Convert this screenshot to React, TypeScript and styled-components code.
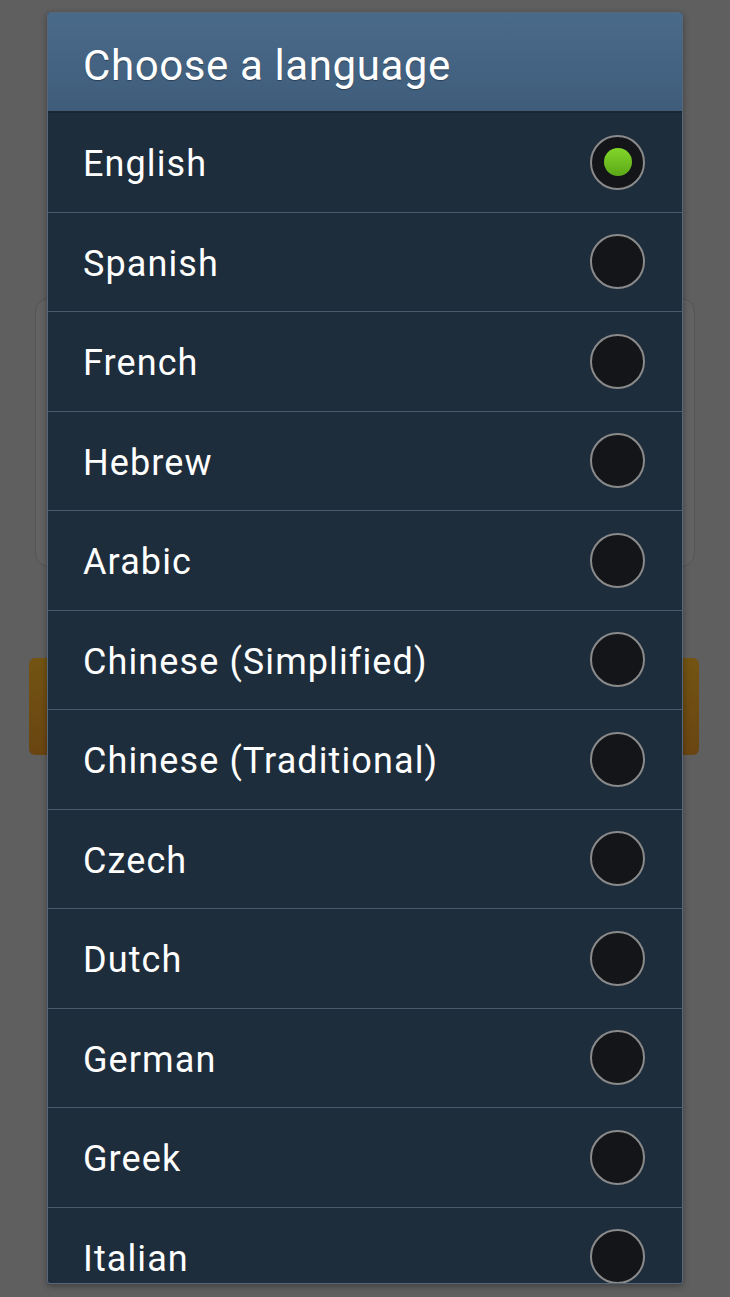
import styled, { createGlobalStyle } from "styled-components";

const GlobalStyle = createGlobalStyle`
  html, body {
    margin: 0;
    padding: 0;
    background: #5f5f5f;
  }
  * {
    box-sizing: border-box;
  }
`;

const languages = [
  "English",
  "Spanish",
  "French",
  "Hebrew",
  "Arabic",
  "Chinese (Simplified)",
  "Chinese (Traditional)",
  "Czech",
  "Dutch",
  "German",
  "Greek",
  "Italian",
];

export default function App() {
  const selected = "English";
  return (
    <Screen>
      <GlobalStyle />
      <Backdrop>
        <BackCard />
        <BackButton />
      </Backdrop>
      <Dialog>
        <Header>Choose a language</Header>
        <List>
          {languages.map((lang) => (
            <Row key={lang}>
              <Label>{lang}</Label>
              <Radio>{lang === selected && <Dot />}</Radio>
            </Row>
          ))}
        </List>
      </Dialog>
    </Screen>
  );
}

const Screen = styled.div`
  position: relative;
  width: 730px;
  height: 1297px;
  overflow: hidden;
  background: #5f5f5f;
  font-family: Roboto, "Noto Sans", sans-serif;
`;

const Backdrop = styled.div`
  display: flex;
  flex-direction: column;
  padding-top: 298px;
`;

const BackCard = styled.div`
  margin: 0 35px;
  height: 269px;
  border: 1px solid #555555;
  border-radius: 14px;
  background: #626262;
`;

const BackButton = styled.div`
  margin: 91px 31px 0 29px;
  height: 97px;
  border-radius: 6px;
  background: linear-gradient(#735413, #6a4511);
`;

const Dialog = styled.div`
  position: absolute;
  top: 12px;
  left: 47px;
  width: 636px;
  height: 1272px;
  display: flex;
  flex-direction: column;
  overflow: hidden;
  border: 1px solid #56677a;
  border-radius: 3px;
  background: #1e2d3c;
  box-shadow: 0 2px 6px rgba(0, 0, 0, 0.35);
`;

const Header = styled.div`
  flex: none;
  height: 100px;
  display: flex;
  align-items: center;
  padding: 6px 0 0 35px;
  background: linear-gradient(#4a6a8a, #3f5d7b);
  border-bottom: 2px solid #1a2532;
  color: #ffffff;
  font-size: 42px;
  letter-spacing: 0.6px;
  text-shadow: 0 1px 1px rgba(0, 0, 0, 0.35);
`;

const List = styled.div`
  display: flex;
  flex-direction: column;
`;

const Row = styled.div`
  flex: none;
  height: 99.5px;
  display: flex;
  align-items: center;
  justify-content: space-between;
  padding: 4px 37px 0 35px;
  border-bottom: 1px solid #4b5a6a;
`;

const Label = styled.span`
  color: #ffffff;
  font-size: 36px;
  letter-spacing: 1.1px;
`;

const Radio = styled.div`
  margin-top: -4px;
  width: 55px;
  height: 55px;
  border-radius: 50%;
  border: 2px solid #8a8a8a;
  background: #141518;
  display: flex;
  align-items: center;
  justify-content: center;
`;

const Dot = styled.div`
  width: 28px;
  height: 28px;
  border-radius: 50%;
  background: linear-gradient(#83d62a, #5ca818);
`;
